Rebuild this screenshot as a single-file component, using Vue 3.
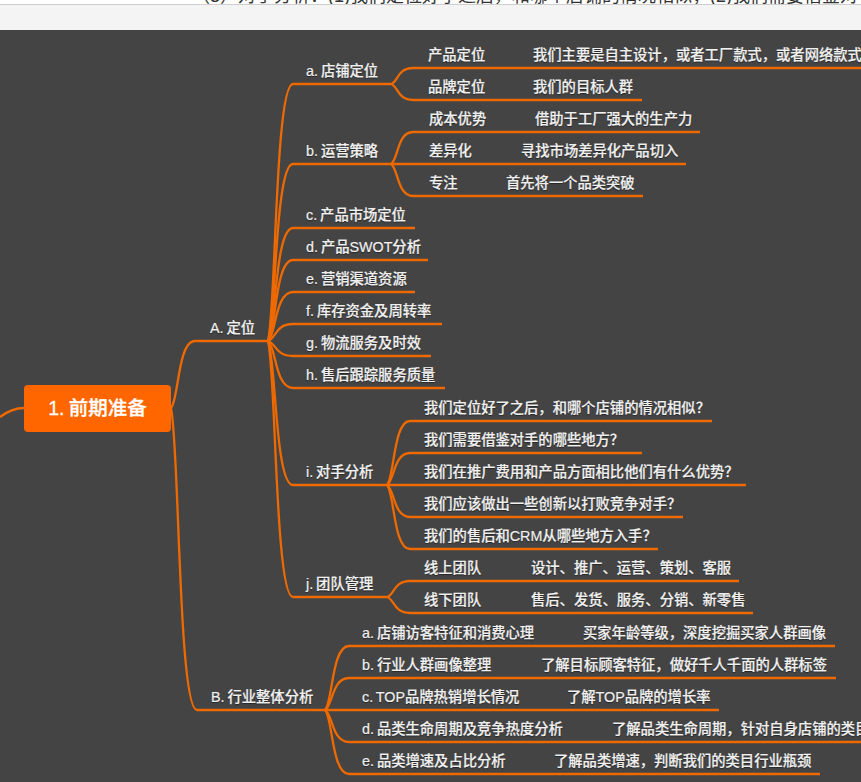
<script setup>
// mind map data: y is the underline of a node, x1/x2 its extent, tx the label's left edge
const tree = [
  {
    text: 'A. 定位', tx: 210, x1: 195, x2: 268, y: 341,
    kids: [
      {
        text: 'a. 店铺定位', tx: 306, x1: 293, x2: 391, y: 84,
        kids: [
          { text: '产品定位', tx: 428, x1: 413, x2: 861, y: 68, note: '我们主要是自主设计，或者工厂款式，或者网络款式', nx: 533 },
          { text: '品牌定位', tx: 428, x1: 413, x2: 642, y: 100, note: '我们的目标人群', nx: 533 }
        ]
      },
      {
        text: 'b. 运营策略', tx: 306, x1: 293, x2: 391, y: 164,
        kids: [
          { text: '成本优势', tx: 429, x1: 413, x2: 700, y: 132, note: '借助于工厂强大的生产力', nx: 535 },
          { text: '差异化', tx: 429, x1: 413, x2: 686, y: 164, note: '寻找市场差异化产品切入', nx: 521 },
          { text: '专注', tx: 429, x1: 413, x2: 643, y: 196, note: '首先将一个品类突破', nx: 506 }
        ]
      },
      { text: 'c. 产品市场定位', tx: 306, x1: 293, x2: 415, y: 228 },
      { text: 'd. 产品SWOT分析', tx: 306, x1: 293, x2: 428, y: 260 },
      { text: 'e. 营销渠道资源', tx: 306, x1: 293, x2: 415, y: 292 },
      { text: 'f. 库存资金及周转率', tx: 306, x1: 293, x2: 442, y: 324 },
      { text: 'g. 物流服务及时效', tx: 306, x1: 293, x2: 431, y: 356 },
      { text: 'h. 售后跟踪服务质量', tx: 306, x1: 293, x2: 445, y: 388 },
      {
        text: 'i. 对手分析', tx: 306, x1: 293, x2: 387, y: 485,
        kids: [
          { text: '我们定位好了之后，和哪个店铺的情况相似？', tx: 424, x1: 410, x2: 712, y: 421 },
          { text: '我们需要借鉴对手的哪些地方？', tx: 424, x1: 410, x2: 642, y: 453 },
          { text: '我们在推广费用和产品方面相比他们有什么优势？', tx: 424, x1: 410, x2: 746, y: 485 },
          { text: '我们应该做出一些创新以打败竞争对手？', tx: 424, x1: 410, x2: 683, y: 517 },
          { text: '我们的售后和CRM从哪些地方入手？', tx: 424, x1: 410, x2: 658, y: 549 }
        ]
      },
      {
        text: 'j. 团队管理', tx: 306, x1: 293, x2: 387, y: 597,
        kids: [
          { text: '线上团队', tx: 424, x1: 410, x2: 739, y: 581, note: '设计、推广、运营、策划、客服', nx: 531 },
          { text: '线下团队', tx: 424, x1: 410, x2: 753, y: 613, note: '售后、发货、服务、分销、新零售', nx: 531 }
        ]
      }
    ]
  },
  {
    text: 'B. 行业整体分析', tx: 211, x1: 197, x2: 325, y: 710,
    kids: [
      { text: 'a. 店铺访客特征和消费心理', tx: 362, x1: 349, x2: 835, y: 646, note: '买家年龄等级，深度挖掘买家人群画像', nx: 583 },
      { text: 'b. 行业人群画像整理', tx: 362, x1: 349, x2: 836, y: 678, note: '了解目标顾客特征，做好千人千面的人群标签', nx: 541 },
      { text: 'c. TOP品牌热销增长情况', tx: 362, x1: 349, x2: 719, y: 710, note: '了解TOP品牌的增长率', nx: 567 },
      { text: 'd. 品类生命周期及竞争热度分析', tx: 362, x1: 349, x2: 861, y: 742, note: '了解品类生命周期，针对自身店铺的类目', nx: 612 },
      { text: 'e. 品类增速及占比分析', tx: 362, x1: 349, x2: 820, y: 774, note: '了解品类增速，判断我们的类目行业瓶颈', nx: 554 }
    ]
  }
]

const hub = { x: 171, y: 408 }
const paths = ['M0 417C8 411 15 408 24 408']
const labels = []

function walk(nodes, from) {
  for (const n of nodes) {
    const d = n.x1 - from.x
    const cy = from.y + (n.y - from.y) * 0.12
    paths.push(`M${from.x} ${from.y}C${from.x + d * 0.32} ${cy} ${from.x + d * 0.28} ${n.y} ${n.x1} ${n.y}H${n.x2}`)
    labels.push({ text: n.text, x: n.tx, y: n.y })
    if (n.note) labels.push({ text: n.note, x: n.nx, y: n.y })
    if (n.kids) walk(n.kids, { x: n.x2, y: n.y })
  }
}
walk(tree, hub)
</script>

<template>
  <div class="page">
    <div class="doc-edge">
      <p>（3）对手分析：(1)我们定位好了之后，和哪个店铺的情况相似；(2)我们需要借鉴对手的哪些地方</p>
    </div>
    <div class="gap"></div>
    <div class="canvas">
      <svg class="lines" width="861" height="752" viewBox="0 30 861 752">
        <path v-for="(d, i) in paths" :key="i" :d="d" />
      </svg>
      <div class="root">1. 前期准备</div>
      <div
        v-for="(l, i) in labels"
        :key="i"
        class="label"
        :style="{ left: l.x + 'px', top: l.y - 53 + 'px' }"
      >{{ l.text }}</div>
    </div>
  </div>
</template>

<style scoped>
.page {
  width: 861px;
  height: 782px;
  overflow: hidden;
  font-family: "Liberation Sans", "Noto Sans CJK SC", sans-serif;
}
.doc-edge {
  height: 4px;
  overflow: hidden;
  background: #fff;
  border-bottom: 1px solid #cfcfcf;
}
.doc-edge p {
  margin: -14px 0 0 192px;
  font-size: 18px;
  line-height: 20px;
  color: #333;
  white-space: nowrap;
}
.gap {
  height: 25px;
  background: #f4f4f4;
}
.canvas {
  position: relative;
  height: 752px;
  overflow: hidden;
  background: #444;
}
.lines {
  position: absolute;
  left: 0;
  top: 0;
}
.lines path {
  fill: none;
  stroke: #ee6a00;
  stroke-width: 2.3;
}
.root {
  position: absolute;
  left: 24px;
  top: 355px;
  width: 147px;
  height: 47px;
  border-radius: 4px;
  background: #ff6600;
  color: #fff;
  font-size: 19.5px;
  font-weight: 500;
  line-height: 47px;
  text-align: center;
  word-spacing: -1px;
  -webkit-text-stroke: 0.3px #fff;
}
.label {
  position: absolute;
  font-size: 14.3px;
  font-weight: 500;
  line-height: 21px;
  color: #f0f0f0;
  white-space: nowrap;
  word-spacing: -1px;
  -webkit-text-stroke: 0.2px #f0f0f0;
  text-shadow: 0 1px 1px rgba(0, 0, 0, 0.45);
}
</style>
